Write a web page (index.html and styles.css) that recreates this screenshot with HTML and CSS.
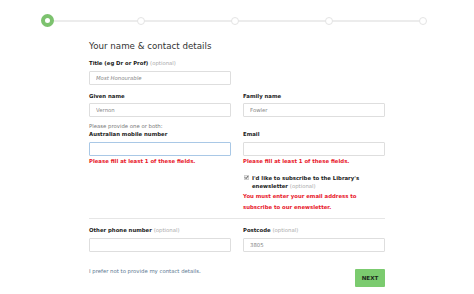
FILE: index.html
```html
<!DOCTYPE html>
<html lang="en">
<head>
<meta charset="utf-8">
<title>Your name &amp; contact details</title>
<link rel="stylesheet" href="styles.css">
</head>
<body>
<div class="stepper">
  <span class="step step-current"></span>
  <span class="step"></span>
  <span class="step"></span>
  <span class="step"></span>
  <span class="step"></span>
</div>
<form class="form">
  <h1 class="heading">Your name &amp; contact details</h1>

  <div class="grid row-title">
    <div class="field">
      <label class="label">Title (eg Dr or Prof) <span class="opt">(optional)</span></label>
      <input class="input" type="text" placeholder="Most Honourable">
    </div>
  </div>

  <div class="grid row-name">
    <div class="field">
      <label class="label">Given name</label>
      <input class="input" type="text" value="Vernon">
    </div>
    <div class="field">
      <label class="label">Family name</label>
      <input class="input" type="text" value="Fowler">
    </div>
  </div>

  <p class="hint">Please provide one or both:</p>

  <div class="grid row-contact">
    <div class="field">
      <label class="label">Australian mobile number</label>
      <input class="input input-focus" type="text">
      <p class="error">Please fill at least 1 of these fields.</p>
    </div>
    <div class="field">
      <label class="label">Email</label>
      <input class="input" type="text">
      <p class="error">Please fill at least 1 of these fields.</p>
      <div class="check">
        <svg class="checkbox" width="5" height="5" viewBox="0 0 10 10" aria-hidden="true">
          <rect x="0.5" y="0.5" width="9" height="9" rx="1" fill="#ececec" stroke="#9a9a9a" stroke-width="1"/>
          <path d="M2.3 5.2 L4.2 7.2 L7.8 2.6" fill="none" stroke="#333" stroke-width="1.6" stroke-linecap="round" stroke-linejoin="round"/>
        </svg>
        <div class="check-text">
          <span class="check-line">I'd like to subscribe to the Library's</span>
          <span class="check-line">enewsletter <span class="opt">(optional)</span></span>
        </div>
      </div>
      <p class="error error-block">You must enter your email address to subscribe to our enewsletter.</p>
    </div>
  </div>

  <hr class="divider">

  <div class="grid row-other">
    <div class="field">
      <label class="label">Other phone number <span class="opt">(optional)</span></label>
      <input class="input" type="text">
    </div>
    <div class="field">
      <label class="label">Postcode <span class="opt">(optional)</span></label>
      <input class="input" type="text" value="3805">
    </div>
  </div>

  <div class="footer">
    <a class="skip" href="#">I prefer not to provide my contact details<span class="dot">.</span></a>
    <button class="next" type="button">NEXT</button>
  </div>
</form>
</body>
</html>
```

FILE: styles.css
```css
* { box-sizing: border-box; }

html, body {
  margin: 0;
  padding: 0;
  background: #ffffff;
}

body {
  font-family: "DejaVu Sans", Verdana, sans-serif;
  color: #222;
  width: 474px;
  height: 294px;
  overflow: hidden;
}

/* stepper */
.stepper {
  position: relative;
  display: grid;
  grid-template-columns: repeat(5, 94px);
  justify-items: center;
  align-items: center;
  margin-top: 14px;
  height: 13px;
}
.stepper::before {
  content: "";
  position: absolute;
  left: 47px;
  width: 376px;
  top: 5.5px;
  height: 2px;
  background: #ececec;
}
.step {
  position: relative;
  width: 8px;
  height: 8px;
  border-radius: 50%;
  background: #fff;
  border: 1.5px solid #e4e4e4;
}
.step-current {
  width: 13px;
  height: 13px;
  border: 4.5px solid #7cc26e;
  background: #fff;
}

/* form */
.form {
  margin: 13px 0 0 89px;
  width: 296px;
}
.heading {
  margin: 0;
  font-family: "DejaVu Sans", sans-serif;
  font-weight: normal;
  font-size: 8.7px;
  line-height: 12px;
  color: #333;
}

.grid {
  display: grid;
  grid-template-columns: 142px 142px;
  column-gap: 12px;
}
.row-title { margin-top: 7px; }
.row-name { margin-top: 7px; }
.row-contact { margin-top: 0; }
.row-other { margin-top: 7px; }

.field {
  display: flex;
  flex-direction: column;
}

.label {
  display: block;
  font-size: 5.35px;
  font-weight: bold;
  line-height: 8px;
  margin-bottom: 3.5px;
  color: #1a1a1a;
}
.opt {
  font-weight: normal;
  color: #aaa;
}

.input {
  display: block;
  width: 142px;
  height: 14px;
  margin: 0;
  padding: 0 6px;
  border: 1px solid #dedede;
  border-radius: 1px;
  background: #fff;
  font-family: "DejaVu Sans", sans-serif;
  font-size: 5.35px;
  color: #888;
  outline: none;
}
.input::placeholder {
  color: #888;
  font-style: italic;
}
.input-focus {
  border-color: #a9c8e6;
}

.hint {
  margin: 5px 0 0;
  font-size: 5.35px;
  line-height: 8px;
  color: #777;
}

.error {
  margin: 1px 0 0;
  font-size: 5.35px;
  font-weight: bold;
  line-height: 8px;
  color: #e8162a;
}
.error-block {
  margin-top: 1.5px;
  line-height: 10.5px;
  width: 120px;
}

.check {
  display: flex;
  align-items: flex-start;
  gap: 3px;
  margin-top: 9px;
  padding-left: 1px;
}
.checkbox {
  flex: none;
  display: block;
  width: 5px;
  height: 5px;
  margin-top: 1.5px;
}
.check-text {
  display: flex;
  flex-direction: column;
  font-size: 5.35px;
  font-weight: bold;
  line-height: 8px;
  color: #1a1a1a;
}
.check-line {
  display: block;
  white-space: nowrap;
}

.divider {
  margin: 6px 0 0;
  border: 0;
  height: 1px;
  background: #e6e6e6;
}

.footer {
  display: flex;
  justify-content: space-between;
  align-items: flex-start;
  margin-top: 15px;
}
.skip {
  font-size: 5.35px;
  line-height: 8px;
  color: #5b7891;
  text-decoration: none;
}
.skip .dot { color: #333; }
.next {
  width: 30px;
  height: 18px;
  margin-top: 2px;
  padding: 0;
  border: 0;
  border-radius: 1px;
  background: #7bcb6f;
  font-family: "DejaVu Sans", sans-serif;
  font-size: 5.6px;
  font-weight: bold;
  color: #1d2a1d;
}
```
